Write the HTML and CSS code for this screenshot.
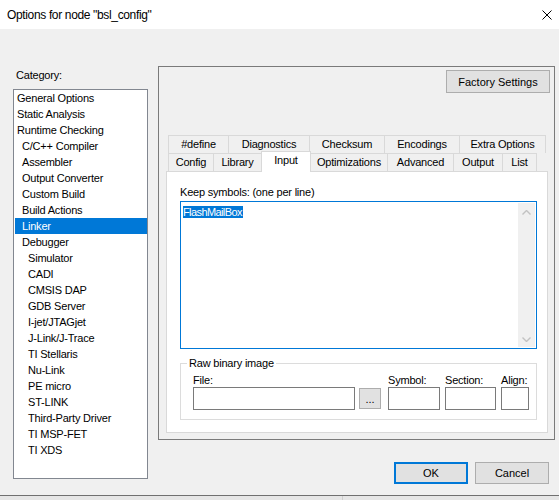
FILE: index.html
```html
<!DOCTYPE html>
<html lang="en">
<head>
    <meta charset="UTF-8">
    <title>Options for node "bsl_config"</title>
    <link rel="stylesheet" href="styles.css">
</head>
<body>
    <div class="titlebar">
        <span class="title">Options for node "bsl_config"</span>
        <svg class="close" width="10" height="10" viewBox="0 0 10 10"><path d="M0.5 0.5L9.5 9.5M9.5 0.5L0.5 9.5" stroke="#000" stroke-width="1" fill="none"/></svg>
    </div>
    <div class="dialog">
        <div class="left">
            <div class="cat-label">Category:</div>
            <ul class="catlist">
                <li>General Options</li>
                <li>Static Analysis</li>
                <li>Runtime Checking</li>
                <li class="lvl2">C/C++ Compiler</li>
                <li class="lvl2">Assembler</li>
                <li class="lvl2">Output Converter</li>
                <li class="lvl2">Custom Build</li>
                <li class="lvl2">Build Actions</li>
                <li class="lvl2 selected">Linker</li>
                <li class="lvl2">Debugger</li>
                <li class="lvl3">Simulator</li>
                <li class="lvl3">CADI</li>
                <li class="lvl3">CMSIS DAP</li>
                <li class="lvl3">GDB Server</li>
                <li class="lvl3">I-jet/JTAGjet</li>
                <li class="lvl3">J-Link/J-Trace</li>
                <li class="lvl3">TI Stellaris</li>
                <li class="lvl3">Nu-Link</li>
                <li class="lvl3">PE micro</li>
                <li class="lvl3">ST-LINK</li>
                <li class="lvl3">Third-Party Driver</li>
                <li class="lvl3">TI MSP-FET</li>
                <li class="lvl3">TI XDS</li>
            </ul>
        </div>
        <div class="right">
            <div class="panel">
                <div class="panel-top">
                    <button class="btn factory">Factory Settings</button>
                </div>
                <div class="tabs">
                    <div class="tabrow">
                        <div class="tab" style="width:61px">#define</div>
                        <div class="tab" style="width:82px">Diagnostics</div>
                        <div class="tab" style="width:76px">Checksum</div>
                        <div class="tab" style="width:76px">Encodings</div>
                        <div class="tab" style="width:87px">Extra Options</div>
                    </div>
                    <div class="tabrow">
                        <div class="tab" style="width:46px">Config</div>
                        <div class="tab" style="width:49px">Library</div>
                        <div class="tab active" style="width:50px">Input</div>
                        <div class="tab" style="width:78px">Optimizations</div>
                        <div class="tab" style="width:67px">Advanced</div>
                        <div class="tab" style="width:50px">Output</div>
                        <div class="tab" style="width:35px">List</div>
                    </div>
                </div>
                <div class="page">
                    <div class="lbl">Keep symbols: (one per line)</div>
                    <div class="memo">
                        <div class="memo-text"><span class="sel">FlashMailBox</span></div>
                        <div class="vscroll">
                            <svg width="9" height="5" viewBox="0 0 9 5"><path d="M0.5 4.5L4.5 0.5L8.5 4.5" stroke="#c2c2c2" stroke-width="1.4" fill="none"/></svg>
                            <svg width="9" height="5" viewBox="0 0 9 5"><path d="M0.5 0.5L4.5 4.5L8.5 0.5" stroke="#c2c2c2" stroke-width="1.4" fill="none"/></svg>
                        </div>
                    </div>
                    <fieldset class="group">
                        <legend>Raw binary image</legend>
                        <div class="field-row">
                            <div class="field f-file">
                                <label>File:</label>
                                <div class="input"></div>
                            </div>
                            <button class="btn browse">...</button>
                            <div class="field f-sym">
                                <label>Symbol:</label>
                                <div class="input"></div>
                            </div>
                            <div class="field f-sec">
                                <label>Section:</label>
                                <div class="input"></div>
                            </div>
                            <div class="field f-align">
                                <label>Align:</label>
                                <div class="input"></div>
                            </div>
                        </div>
                    </fieldset>
                </div>
            </div>
            <div class="actions">
                <button class="btn ok">OK</button>
                <button class="btn cancel">Cancel</button>
            </div>
        </div>
    </div>
    <div class="below"><div class="seg"></div></div>
</body>
</html>
```

FILE: styles.css
```css
*{
    box-sizing: border-box;
}
body{
    margin:0;
    width:559px;
    height:500px;
    overflow:hidden;
    background:#f0f0f0;
    font-family:"Liberation Sans", Arial, sans-serif;
    font-size:11px;
    letter-spacing:-0.2px;
    color:#000;
}
.titlebar{
    height:29px;
    background:#fff;
    display:flex;
    align-items:center;
    justify-content:space-between;
    padding:0 7px;
}
.title{
    font-size:12px;
    letter-spacing:-0.35px;
}
.dialog{
    display:flex;
    height:467px;
    border-bottom:1px solid #707070;
}
.left{
    margin-left:13px;
    width:135px;
    padding-top:39px;
}
.cat-label{
    line-height:14px;
    padding-left:3px;
    margin-bottom:7px;
}
.catlist{
    list-style:none;
    margin:0;
    padding:0 0 0 1px;
    height:390px;
    border:1px solid #828790;
    background:#fff;
}
.catlist li{
    height:16px;
    line-height:16px;
    padding-left:2px;
    white-space:nowrap;
}
.catlist .lvl2{
    padding-left:7px;
}
.catlist .lvl3{
    padding-left:13px;
}
.catlist .selected{
    background:#0078d7;
    color:#fff;
}
.right{
    margin-left:10px;
    width:397px;
    padding-top:37px;
}
.panel{
    height:374px;
    border:1px solid #7a7a7a;
}
.panel-top{
    display:flex;
    justify-content:flex-end;
    padding:3px 4px 0 0;
}
.btn{
    height:23px;
    padding:0;
    background:#e1e1e1;
    border:1px solid #adadad;
    font:inherit;
    color:#000;
}
.factory{
    width:104px;
}
.tabs{
    margin:42px 0 0 9px;
}
.tabrow{
    display:flex;
    align-items:flex-end;
    height:18px;
}
.tab{
    height:18px;
    margin-right:-1px;
    border:1px solid #d9d9d9;
    border-bottom:none;
    background:#f0f0f0;
    text-align:center;
    line-height:17px;
    white-space:nowrap;
}
.tab.active{
    height:21px;
    margin-bottom:-1px;
    background:#fff;
    position:relative;
    z-index:1;
    line-height:16px;
}
.page{
    margin:0 6px 0 7px;
    height:262px;
    border:1px solid #d9d9d9;
    background:#fff;
    padding:13px 0 0 13px;
}
.lbl{
    line-height:14px;
    margin-bottom:2px;
}
.memo{
    width:357px;
    height:148px;
    border:1px solid #0078d7;
    display:flex;
    justify-content:space-between;
}
.memo-text{
    padding:4px 0 0 2px;
}
.sel{
    display:inline-block;
    height:12px;
    line-height:12px;
    padding-right:1px;
    background:#0078d7;
    color:#fff;
    letter-spacing:-0.6px;
}
.vscroll{
    width:17px;
    margin:1px 1px 1px 0;
    background:#f0f0f0;
    display:flex;
    flex-direction:column;
    justify-content:space-between;
    align-items:center;
    padding:7px 0 5px;
}
.vscroll svg{
    display:block;
}
.group{
    margin:7px 0 0;
    width:357px;
    min-width:0;
    border:1px solid #dcdcdc;
    padding:0 0 9px 6px;
}
.group legend{
    padding:0 2px;
    line-height:14px;
}
.field-row{
    display:flex;
    align-items:flex-end;
    padding:3px 0 0 6px;
}
.field{
    display:flex;
    flex-direction:column;
}
.field label{
    line-height:14px;
    white-space:nowrap;
}
.input{
    height:23px;
    border:1px solid #7a7a7a;
    background:#fff;
}
.f-file{
    width:162px;
}
.browse{
    width:22px;
    height:21px;
    margin:0 0 1px 4px;
}
.f-sym{
    width:52px;
    margin-left:7px;
}
.f-sec{
    width:51px;
    margin-left:5px;
}
.f-align{
    width:28px;
    margin-left:5px;
}
.actions{
    display:flex;
    justify-content:flex-end;
    gap:7px;
    margin-top:22px;
    padding-right:6px;
}
.ok,
.cancel{
    width:74px;
    height:22px;
}
.ok{
    border:2px solid #0078d7;
}
.below{
    height:4px;
    display:flex;
    background:#e6e6e6;
}
.below .seg{
    width:343px;
    border-right:1px solid #cfcfcf;
}
```
